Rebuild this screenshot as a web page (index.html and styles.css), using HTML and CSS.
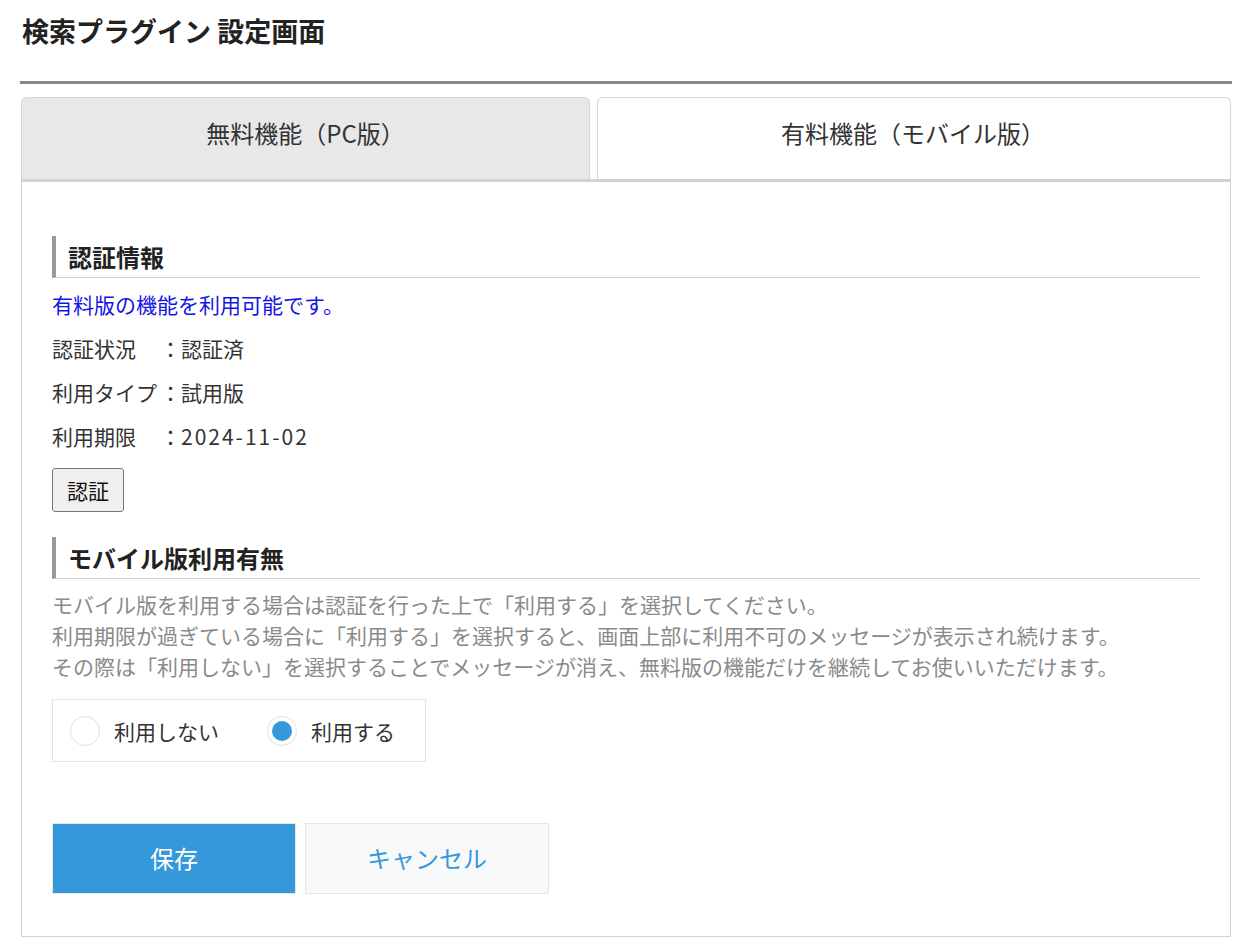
FILE: index.html
```html
<!DOCTYPE html>
<html lang="ja">
<head>
    <meta charset="UTF-8">
    <meta name="viewport" content="width=device-width, initial-scale=1.0">
    <title>検索プラグイン 設定画面</title>
    <link rel="stylesheet" href="styles.css">
</head>
<body>
    <div class="page">
        <h1>検索プラグイン 設定画面</h1>
        <hr class="rule">

        <div class="settings">
            <div class="tabs">
                <div class="tab">無料機能（PC版）</div>
                <div class="tab active">有料機能（モバイル版）</div>
            </div>

            <div class="panel">
                <h2 class="section-title first">認証情報</h2>
                <p class="notice">有料版の機能を利用可能です。</p>
                <p class="info-row"><span class="info-label">認証状況</span>：認証済</p>
                <p class="info-row"><span class="info-label">利用タイプ</span>：試用版</p>
                <p class="info-row"><span class="info-label">利用期限</span>：<span class="date">2024-11-02</span></p>
                <button class="auth-btn">認証</button>

                <h2 class="section-title">モバイル版利用有無</h2>
                <p class="description">
                    モバイル版を利用する場合は認証を行った上で「利用する」を選択してください。<br>
                    利用期限が過ぎている場合に「利用する」を選択すると、画面上部に利用不可のメッセージが表示され続けます。<br>
                    その際は「利用しない」を選択することでメッセージが消え、無料版の機能だけを継続してお使いいただけます。
                </p>

                <div class="radio-group">
                    <label class="radio">
                        <input type="radio" name="mobile" value="off">
                        <span class="radio-mark"></span>
                        <span class="radio-text">利用しない</span>
                    </label>
                    <label class="radio">
                        <input type="radio" name="mobile" value="on" checked>
                        <span class="radio-mark"></span>
                        <span class="radio-text">利用する</span>
                    </label>
                </div>

                <div class="actions">
                    <button class="btn btn-save">保存</button>
                    <button class="btn btn-cancel">キャンセル</button>
                </div>
            </div>
        </div>
    </div>
</body>
</html>
```

FILE: styles.css
```css
body {
    margin: 0;
    padding: 0;
    font-family: 'Noto Sans CJK JP', 'Noto Sans', sans-serif;
    color: #333;
    background: #fff;
}

.page {
    padding: 0 4px 0 20px;
}

h1 {
    font-size: 27px;
    line-height: 36px;
    font-weight: bold;
    color: #222;
    margin: 13px 0 32px 2px;
}

.rule {
    border: none;
    border-top: 3px solid #888;
    margin: 0;
}

.settings {
    margin: 13px 1px 0 1px;
}

.tabs {
    display: grid;
    grid-template-columns: 569px 1fr;
    gap: 7px;
    border-bottom: 3px solid #d2d2d2;
}

.tab {
    height: 82px;
    display: flex;
    align-items: center;
    justify-content: center;
    padding-bottom: 12px;
    box-sizing: border-box;
    font-size: 24px;
    color: #333;
    background-color: #e8e8e8;
    border: 1px solid #d6d6d6;
    border-bottom: none;
    border-radius: 6px 6px 0 0;
}

.tab.active {
    background-color: #fff;
    padding-right: 2px;
}

.panel {
    border: 1px solid #d2d2d2;
    border-top: none;
    padding: 54px 30px 42px 30px;
}

.section-title {
    font-size: 24px;
    line-height: 41px;
    font-weight: bold;
    color: #222;
    margin: 25px 0 0 0;
    padding-left: 12px;
    border-left: 4px solid #999;
    border-bottom: 1px solid #d0d0d0;
}

.section-title.first {
    margin-top: 0;
}

.notice {
    color: #1414e6;
}

.notice,
.info-row {
    font-size: 21px;
    line-height: 32px;
    margin: 10px 0 12px 0;
}

.info-row {
    margin-top: 0;
}

.info-label {
    display: inline-block;
    width: 108px;
}

.date {
    letter-spacing: 2px;
}

.auth-btn {
    display: block;
    margin-top: 16px;
    height: 44px;
    padding: 0 14px;
    font-family: inherit;
    font-size: 21px;
    color: #111;
    background-color: #efefef;
    border: 1px solid #777;
    border-radius: 3px;
}

.description {
    font-size: 21px;
    line-height: 31px;
    color: #8a8a8a;
    margin: 10px 0 17px 0;
}

.radio-group {
    display: inline-flex;
    align-items: center;
    gap: 48px;
    height: 61px;
    padding: 0 30px 0 17px;
    border: 1px solid #e3e3e3;
}

.radio {
    display: flex;
    align-items: center;
    gap: 14px;
    font-size: 21px;
    color: #333;
    cursor: pointer;
}

.radio input {
    display: none;
}

.radio-mark {
    width: 28px;
    height: 28px;
    border: 1px solid #e3e3e3;
    border-radius: 50%;
    box-shadow: 0 0 1px rgba(0, 0, 0, 0.08);
    position: relative;
}

.radio input:checked + .radio-mark::after {
    content: "";
    position: absolute;
    top: 4px;
    left: 4px;
    width: 20px;
    height: 20px;
    border-radius: 50%;
    background-color: #3498db;
}

.actions {
    display: flex;
    gap: 9px;
    margin-top: 61px;
}

.btn {
    width: 244px;
    height: 71px;
    padding-bottom: 3px;
    font-family: inherit;
    font-size: 24px;
    border: 1px solid #e3e7e8;
    cursor: pointer;
}

.btn-save {
    color: #fff;
    background-color: #3498db;
}

.btn-cancel {
    color: #3498db;
    background-color: #f7f9fa;
}
```
